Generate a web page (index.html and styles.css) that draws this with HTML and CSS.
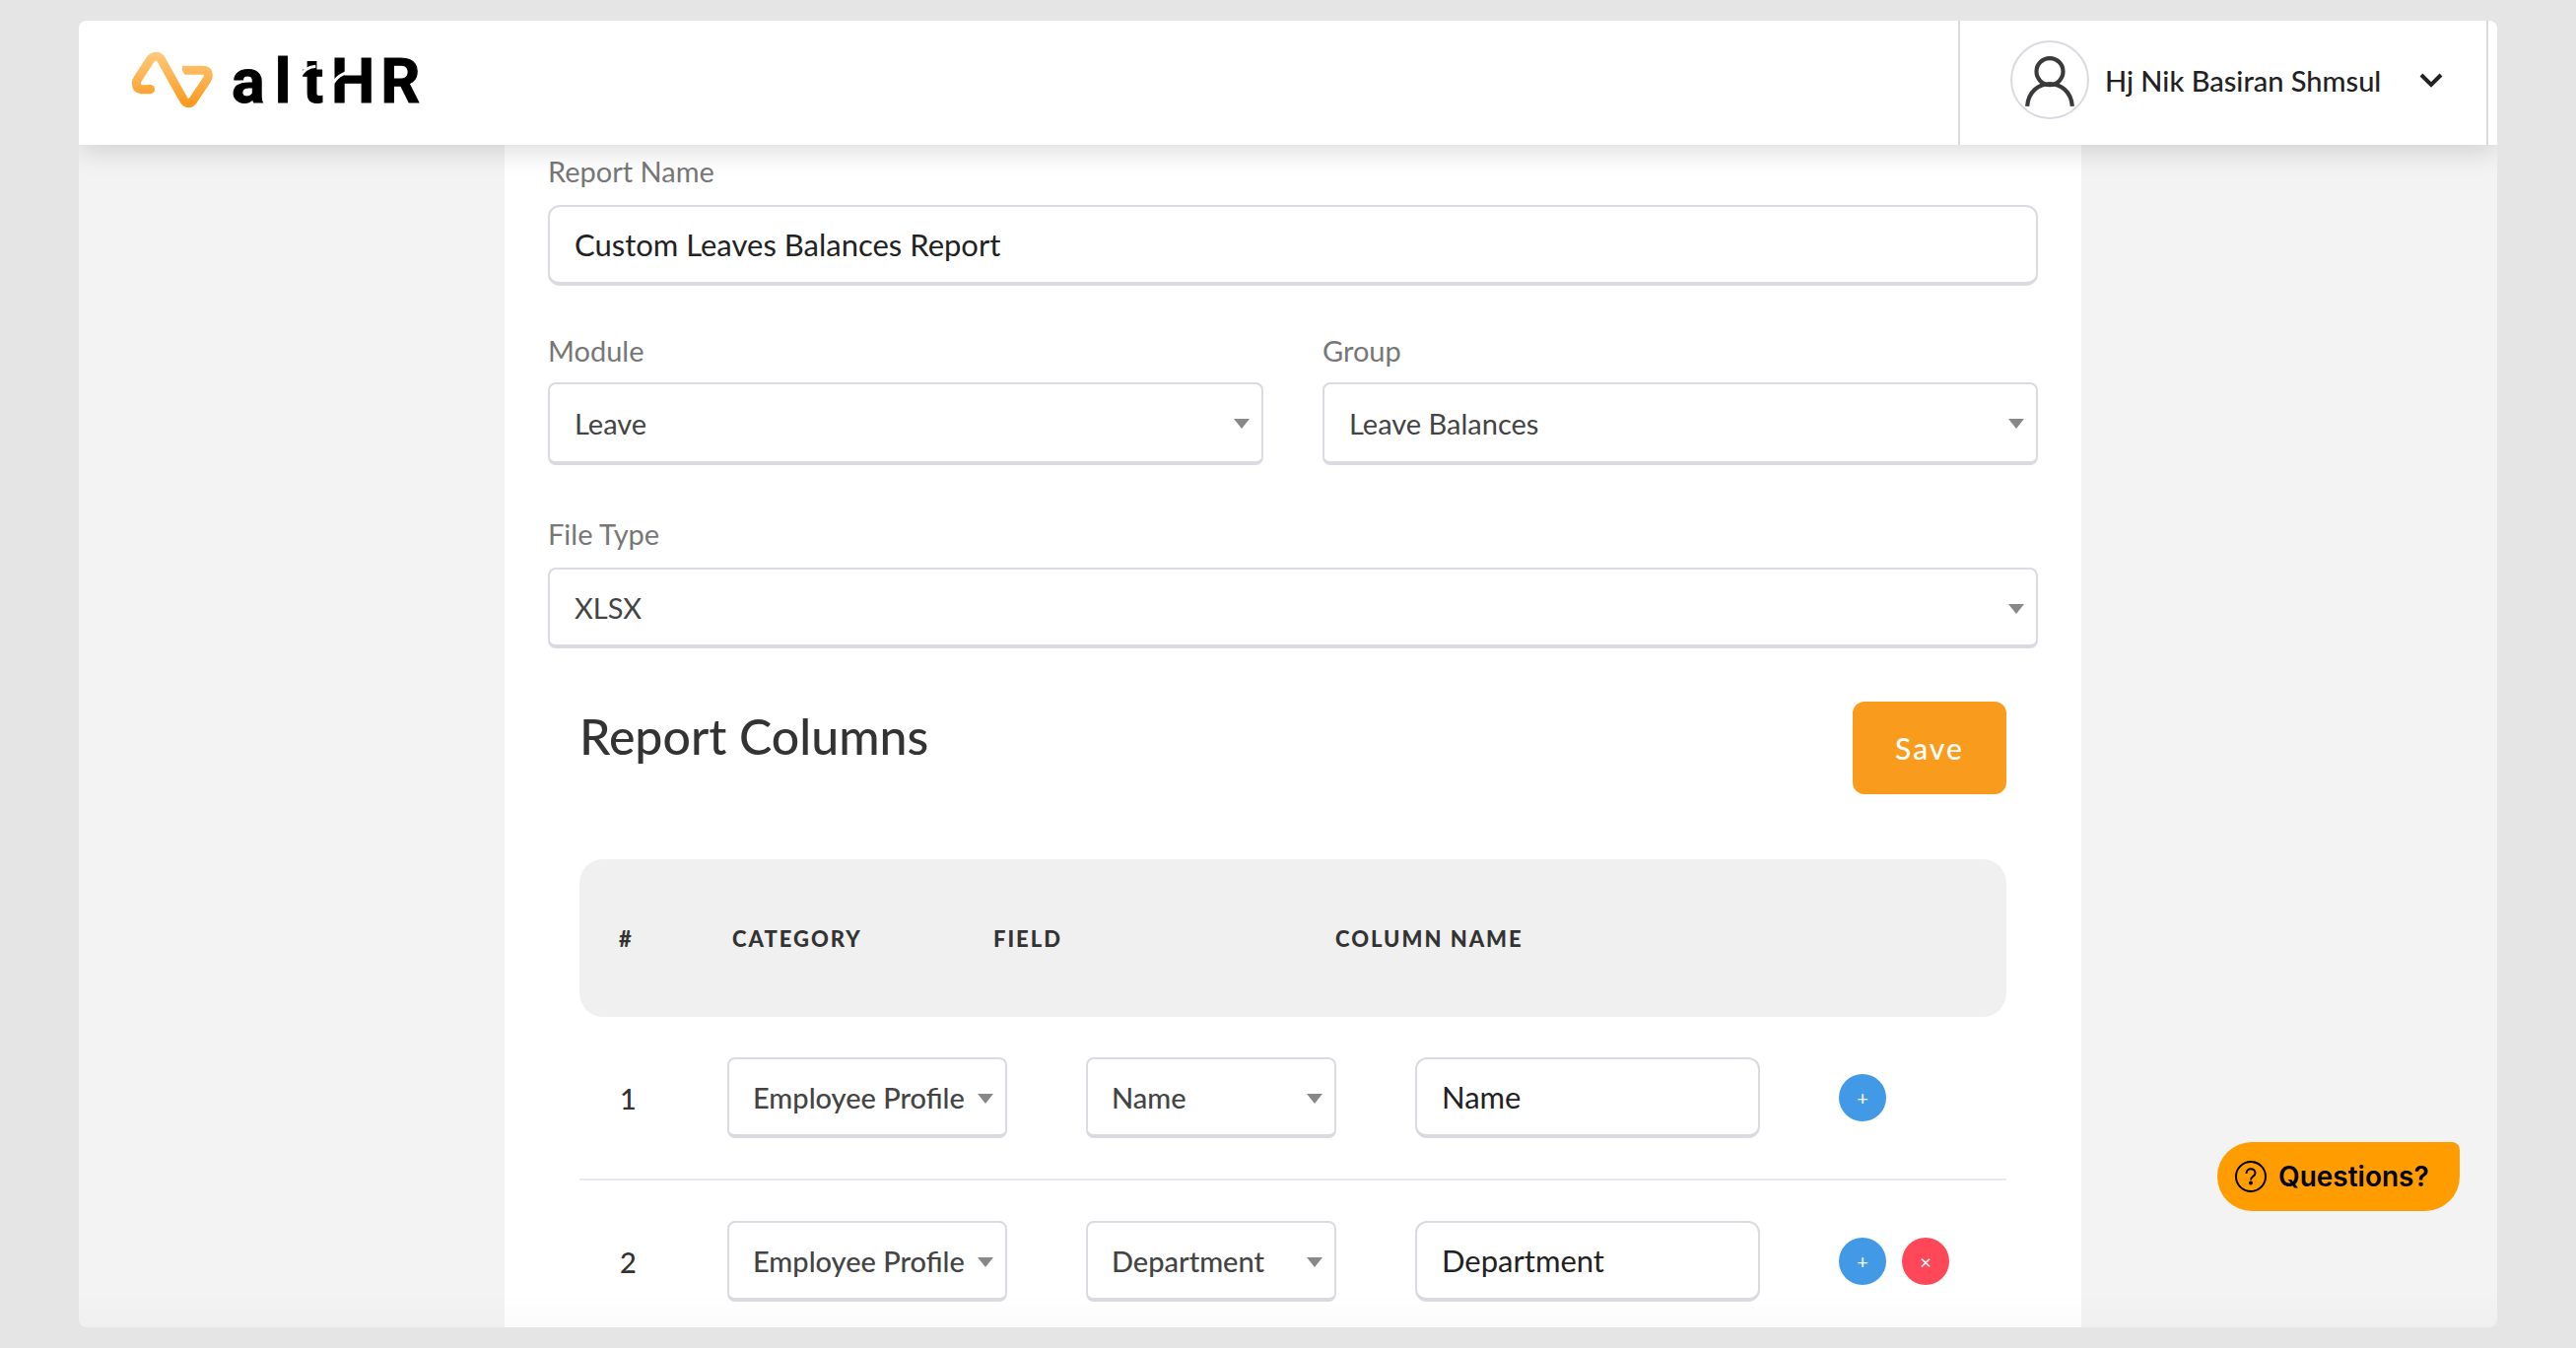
FILE: index.html
```html
<!DOCTYPE html>
<html lang="en">
<head>
  <meta charset="UTF-8" />
  <meta name="viewport" content="width=device-width, initial-scale=1.0"/>
  <title>altHR - Custom Report</title>
  <link rel="stylesheet" href="styles.css">
</head>
<body>
  <div class="app">
    <header class="topbar">
      <a class="logo" href="#" aria-label="altHR">
        <svg viewBox="190 60 960 300" width="320" height="100">
          <defs>
            <linearGradient id="mark" gradientUnits="userSpaceOnUse" x1="0" y1="128" x2="0" y2="297">
              <stop offset="0" stop-color="#ffca7d"/>
              <stop offset="1" stop-color="#f9981b"/>
            </linearGradient>
          </defs>
          <path class="mark" d="M249 242 H222 Q206 240 206 224 Q206 216 211 209 L249 151 Q257 142 266 142 Q276 142 282 152 L349 272 Q356 284 365 284 Q373 284 380 274 L420 214 Q425 207 425 199 Q424 184 408 184 H346"/>
          <circle class="mark-end" cx="248" cy="242" r="14"/>
          <path class="cut" d="M325 160 L355 208"/>
          <text class="wordmark" y="283"><tspan x="496">a</tspan><tspan x="627">l</tspan><tspan x="712">t</tspan><tspan x="799">H</tspan><tspan x="950">R</tspan></text>
          <path class="cut" d="M704 206 Q716 176 752 172"/>
          <path class="cut" d="M806 222 Q824 190 880 183"/>
        </svg>
      </a>
      <button class="user">
        <span class="avatar">
          <svg viewBox="0 0 48 50" width="50" height="52">
            <circle cx="24" cy="15" r="13"/>
            <path d="M2 49 C3 34 14 27 24 27 C34 27 45 34 46 49"/>
          </svg>
        </span>
        <span class="user-name">Hj Nik Basiran Shmsul</span>
        <svg class="chevron" viewBox="0 0 24 16" width="24" height="16"><path d="M2 3 L12 13 L22 3"/></svg>
      </button>
    </header>

    <main>
      <form class="card">
        <div class="field">
          <label for="report-name">Report Name</label>
          <input id="report-name" type="text" value="Custom Leaves Balances Report" />
        </div>
        <div class="field-row">
          <div class="field">
            <label for="module">Module</label>
            <div class="select"><select id="module"><option>Leave</option></select></div>
          </div>
          <div class="field">
            <label for="group">Group</label>
            <div class="select"><select id="group"><option>Leave Balances</option></select></div>
          </div>
        </div>
        <div class="field">
          <label for="file-type">File Type</label>
          <div class="select"><select id="file-type"><option>XLSX</option></select></div>
        </div>

        <section class="columns">
          <div class="columns-head">
            <h2>Report Columns</h2>
            <button type="button" class="save">Save</button>
          </div>
          <table>
            <thead>
              <tr><th>#</th><th>Category</th><th>Field</th><th>Column Name</th></tr>
            </thead>
            <tbody>
              <tr>
                <td class="num">1</td>
                <td><div class="select"><select aria-label="Category 1"><option>Employee Profile</option></select></div></td>
                <td><div class="select"><select aria-label="Field 1"><option>Name</option></select></div></td>
                <td><input type="text" aria-label="Column name 1" value="Name" /></td>
                <td class="actions">
                  <button type="button" class="add">+</button>
                </td>
              </tr>
              <tr>
                <td class="num">2</td>
                <td><div class="select"><select aria-label="Category 2"><option>Employee Profile</option></select></div></td>
                <td><div class="select"><select aria-label="Field 2"><option>Department</option></select></div></td>
                <td><input type="text" aria-label="Column name 2" value="Department" /></td>
                <td class="actions">
                  <button type="button" class="add">+</button>
                  <button type="button" class="remove">×</button>
                </td>
              </tr>
            </tbody>
          </table>
        </section>
      </form>
    </main>

    <button class="questions">
      <svg viewBox="0 0 32 32" width="32" height="32">
        <circle cx="16" cy="16" r="15"/>
        <path d="M11.500 13 C11.500 6.500 20.500 7 20.500 12.500 C20.500 16 16 15.500 16 19.500"/>
        <circle class="dot" cx="16" cy="22.500" r="1"/>
      </svg>
      Questions?
    </button>
  </div>
</body>
</html>
```
FILE: styles.css
```css
* { box-sizing: border-box; }
body {
  margin: 0;
  font-family: Lato, "Liberation Sans", sans-serif;
  background: #e5e5e5;
  color: #333;
}
button, input, select { font-family: inherit; margin: 0; }
button { cursor: pointer; border: none; }

.app {
  position: relative;
  margin: 21px 80px;
  height: calc(100vh - 42px);
  background: #f3f3f3;
  border-radius: 8px;
  overflow: hidden;
}
/* soft fade along the bottom edge */
.app::after {
  content: "";
  position: absolute;
  left: 0;
  right: 0;
  bottom: 0;
  height: 36px;
  background: linear-gradient(transparent, rgba(0, 0, 0, 0.015));
  pointer-events: none;
}

/* Top bar */
.topbar {
  position: relative;
  z-index: 1;
  display: flex;
  justify-content: space-between;
  height: 126px;
  padding: 0 9px 0 53px;
  background: #fff;
  box-shadow: 0 6px 26px rgba(0, 0, 0, 0.15);
}
.logo {
  display: flex;
  align-items: center;
}
.logo svg { margin-bottom: 8px; }
.mark {
  fill: none;
  stroke: url(#mark);
  stroke-width: 27;
}
.mark-end { fill: #fca736; }
.cut {
  fill: none;
  stroke: #fff;
  stroke-width: 9;
}
.wordmark {
  font-family: Roboto, "Liberation Sans", sans-serif;
  font-size: 188px;
  font-weight: 700;
  fill: #000;
  stroke: #000;
  stroke-width: 3;
}
.user {
  display: flex;
  align-items: center;
  gap: 16px;
  min-width: 538px;
  padding: 0 44px 6px 51px;
  background: #fff;
  border: solid #dadae0;
  border-width: 0 2px;
}
.avatar {
  display: flex;
  align-items: center;
  justify-content: center;
  width: 80px;
  height: 80px;
  padding-top: 4px;
  border: 2px solid #dadae2;
  border-radius: 50%;
}
.avatar svg, .chevron path {
  fill: none;
  stroke: #3a3a3a;
  stroke-width: 4;
}
.user-name {
  font-size: 29px;
  font-weight: 500;
  color: #222;
}
.chevron { margin-left: auto; }
.chevron path { stroke: #222; }

/* Form */
main { padding-left: 10px; }
.card {
  max-width: 1600px;
  min-height: 100vh;
  margin: 0 auto;
  padding: 9px 44px;
  background: #fff;
}
.field label {
  display: block;
  margin-bottom: 16px;
  font-size: 29px;
  line-height: 36px;
  color: #777;
}
.field-row {
  display: grid;
  grid-template-columns: 1fr 1fr;
  gap: 60px;
  margin: 48px 0 52px;
}
.field-row label { margin-bottom: 14px; }
input, select {
  display: block;
  width: 100%;
  height: 82px;
  padding: 0 25px;
  background: #fff;
  border: 2px solid #dadae0;
  border-bottom-width: 4px;
}
input {
  font-size: 31px;
  color: #222;
  border-radius: 12px;
}
select {
  appearance: none;
  font-size: 29px;
  color: #444;
  border-radius: 8px;
}
.field-row select { height: 84px; }
.select { position: relative; }
.select::after {
  content: "";
  position: absolute;
  right: 14px;
  top: 37px;
  border: solid transparent;
  border-width: 10px 8px 0;
  border-top-color: #888;
  pointer-events: none;
}

/* Report columns */
.columns { padding: 54px 32px 0; }
.columns-head {
  display: flex;
  justify-content: space-between;
  align-items: flex-start;
  margin-bottom: 66px;
}
h2 {
  margin: 0;
  font-size: 50px;
  font-weight: 500;
  line-height: 70px;
}
.save {
  width: 156px;
  height: 94px;
  background: #f99c1e;
  border-radius: 12px;
  color: #fff;
  font-size: 30px;
  font-weight: 500;
  letter-spacing: 2px;
}
table, thead, tbody { display: block; }
tr {
  display: grid;
  align-items: center;
}
thead tr {
  grid-template-columns: 115fr 265fr 347fr 681fr;
  height: 160px;
  padding-left: 40px;
  background: #f0f0f0;
  border-radius: 24px;
}
th {
  padding: 0;
  text-align: left;
  text-transform: uppercase;
  font-size: 22px;
  font-weight: 900;
  letter-spacing: 2px;
}
tbody tr {
  grid-template-columns: 110fr 364fr 334fr 430fr 210fr;
  height: 166px;
  border-bottom: 2px solid #e8e8ef;
}
td { padding: 0 40px; }
td.num { padding: 0 0 0 41px; }
td select, td.num {
  font-size: 29px;
  font-weight: 500;
}
td select { padding: 0 0 0 24px; }
.actions {
  display: flex;
  gap: 16px;
}
.actions button {
  width: 48px;
  height: 48px;
  padding: 0;
  border-radius: 50%;
  color: #fff;
  font-size: 20px;
}
.add { background: #4299e6; }
.remove { background: #ff475a; }

/* Help bubble */
.questions {
  position: absolute;
  right: 38px;
  bottom: 118px;
  display: flex;
  align-items: center;
  gap: 12px;
  width: 246px;
  height: 70px;
  padding: 0 18px;
  background: #ff9d00;
  border-radius: 35px 8px 35px 35px;
  color: #000;
  font-family: Inter, "Liberation Sans", sans-serif;
  font-size: 28px;
  font-weight: 600;
}
.questions svg {
  flex: none;
  fill: none;
  stroke: #000;
  stroke-width: 2;
}
.questions .dot { fill: #000; }
```
